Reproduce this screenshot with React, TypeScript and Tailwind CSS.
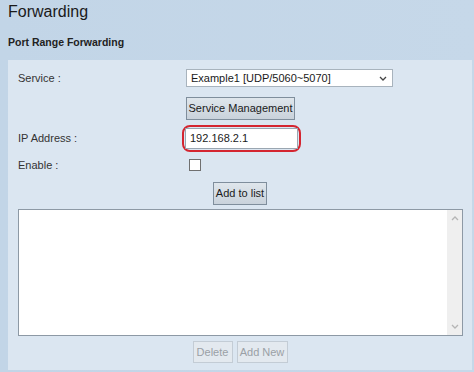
const Chevron = ({ up = false }: { up?: boolean }) => (
  <svg width="8" height="5" viewBox="0 0 8 5" className={up ? "rotate-180" : ""}>
    <path d="M1 1 L4 4 L7 1" fill="none" stroke="currentColor" strokeWidth="1.3" />
  </svg>
);

const Button = ({ label, disabled = false, className = "" }: { label: string; disabled?: boolean; className?: string }) => (
  <button
    type="button"
    className={
      disabled
        ? `h-[22px] px-[2px] whitespace-nowrap border border-[#c3ccd5] bg-[#e3e9ef] text-[11px] text-[#9aa0a6] ${className}`
        : `h-[23px] px-[1px] whitespace-nowrap border border-[#7f8e9c] bg-gradient-to-b from-[#dfe6ec] to-[#c9d2db] text-[11px] text-[#1a1a1a] ${className}`
    }
  >
    {label}
  </button>
);

const App = () => {
  return (
    <div
      className="w-[474px] h-[372px] overflow-hidden bg-gradient-to-r from-[#c2d5e7] to-[#c6d8e9] text-[#222]"
      style={{ fontFamily: '"Liberation Sans", Arial, sans-serif' }}
    >
      <h1 className="pl-2 pt-[3px] text-[16px] leading-[18px] text-[#1a1a1a]">Forwarding</h1>
      <h2 className="pl-2 mt-[15px] text-[10.5px] leading-[12px] font-bold text-[#222]">Port Range Forwarding</h2>

      <div className="ml-2 mt-[12px] w-[464px] h-[310px] bg-[#dbe6f1] flex flex-col text-[11px]">
        {/* Service */}
        <div className="mt-[9px] flex items-center h-[18px]">
          <span className="w-[178px] pl-[10px] text-[#333]">Service :</span>
          <div className="w-[207px] h-[18px] bg-white border border-[#a8b3bd] flex items-center justify-between pl-[4px] pr-[5px] text-[#1a1a1a]">
            <span>Example1 [UDP/5060~5070]</span>
            <span className="text-[#444]">
              <Chevron />
            </span>
          </div>
        </div>

        {/* Service management */}
        <div className="mt-[10px] pl-[178px] flex">
          <Button label="Service Management" className="w-[109px]" />
        </div>

        {/* IP address */}
        <div className="mt-[5px] flex items-center h-[27px]">
          <span className="w-[174px] pl-[10px] text-[#333]">IP Address :</span>
          <div className="w-[119px] h-[27px] rounded-[8px] border-[2.5px] border-[#d42530] p-[1px]">
            <div className="w-full h-full bg-white border border-[#9aa6b1] flex items-center pl-[4px] text-[#1a1a1a]">192.168.2.1</div>
          </div>
        </div>

        {/* Enable */}
        <div className="mt-[6px] flex items-center h-[14px]">
          <span className="w-[181px] pl-[10px] text-[#333]">Enable :</span>
          <span className="w-[12px] h-[12px] bg-white border border-[#707070]" />
        </div>

        {/* Add to list */}
        <div className="mt-[10px] flex justify-center">
          <Button label="Add to list" className="w-[54px] h-[22px]" />
        </div>

        {/* List */}
        <div className="mt-[4px] ml-[10px] w-[445px] h-[127px] bg-white border border-[#8d99a5] flex justify-end">
          <div className="w-[15px] h-full bg-[#efefef] flex flex-col items-center justify-between py-[6px] text-[#b5b5b5]">
            <Chevron up />
            <Chevron />
          </div>
        </div>

        {/* Delete / Add New */}
        <div className="mt-[5px] flex justify-center gap-[4px]">
          <Button label="Delete" disabled className="w-[40px]" />
          <Button label="Add New" disabled className="w-[51px]" />
        </div>
      </div>
    </div>
  );
};

export default App;
